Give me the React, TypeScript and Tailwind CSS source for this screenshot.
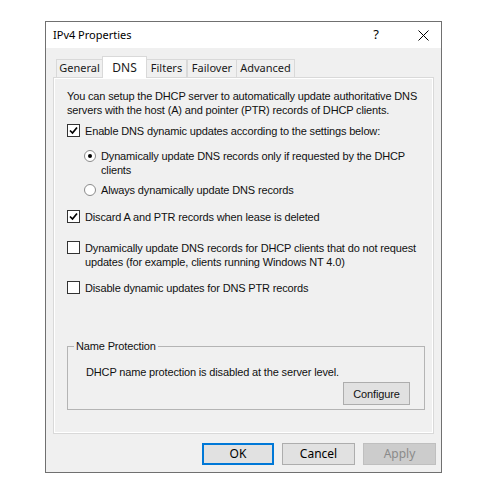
import React from "react";

const body = { fontFamily: '"Liberation Sans", Arial, sans-serif' };
const ui = { fontFamily: '"Noto Sans", "Open Sans", sans-serif' };

function Check({ checked }: { checked?: boolean }) {
  return (
    <div className="w-[13px] h-[13px] border border-[#333] bg-white flex items-center justify-center shrink-0">
      {checked && (
        <svg width="9" height="9" viewBox="0 0 9 9">
          <path d="M1 4.5 L3.5 7 L8 1.5" stroke="#000" strokeWidth="1.7" fill="none" />
        </svg>
      )}
    </div>
  );
}

function Radio({ checked }: { checked?: boolean }) {
  return (
    <svg width="12" height="12" viewBox="0 0 12 12" className="shrink-0">
      <circle cx="6" cy="6" r="5.5" fill="#fff" stroke="#8a8a8a" />
      {checked && <circle cx="6" cy="6" r="2" fill="#000" />}
    </svg>
  );
}

export default function App() {
  return (
    <div className="w-[480px] h-[494px] bg-white pt-[21px] pl-[45px]">
      <div className="w-[397px] h-[452px] border border-[#707070] flex flex-col bg-[#f0f0f0] text-black">
        <div className="h-[26px] bg-white flex items-center pl-[7px] pr-[12px] shrink-0">
          <span className="text-[11px] flex-1" style={ui}>IPv4 Properties</span>
          <span className="text-[13px] mr-[39px]" style={ui}>?</span>
          <svg width="11" height="11" viewBox="0 0 11 11">
            <path d="M0.5 0.5 L10.5 10.5 M10.5 0.5 L0.5 10.5" stroke="#000" strokeWidth="1" />
          </svg>
        </div>
        <div className="flex flex-col px-[7px] pt-[7px] flex-1">
          <div className="flex items-end pl-[3px] h-[22px] relative text-[11px] text-[#1a1a1a]" style={ui}>
            <div className="w-[46px] h-[18px] bg-[#f0f0f0] border border-r-0 border-b-0 border-[#d9d9d9] flex items-center justify-center">General</div>
            <div className="w-[45px] h-[22px] -mb-px bg-white border border-b-0 border-[#d9d9d9] flex items-start justify-center pt-[2px] text-[12px] z-10">DNS</div>
            <div className="w-[40px] h-[18px] bg-[#f0f0f0] border border-l-0 border-b-0 border-[#d9d9d9] flex items-center justify-center">Filters</div>
            <div className="w-[49px] h-[18px] bg-[#f0f0f0] border border-r-0 border-b-0 border-[#d9d9d9] flex items-center justify-center">Failover</div>
            <div className="w-[59px] h-[18px] bg-[#f0f0f0] border border-b-0 border-[#d9d9d9] flex items-center justify-center">Advanced</div>
          </div>
          <div className="h-[357px] border border-[#d9d9d9] bg-[#f0f0f0] shadow-[inset_0_0_0_1px_#ffffff] flex flex-col pl-[13px] pr-[8px] pt-[11px] text-[11px] tracking-[-0.15px] leading-[14px] text-[#111]" style={body}>
            <p>You can setup the DHCP server to automatically update authoritative DNS servers with the host (A) and pointer (PTR) records of DHCP clients.</p>
            <div className="flex items-start gap-[5px] mt-[7px]">
              <div className="mt-[0px]"><Check checked /></div>
              <span>Enable DNS dynamic updates according to the settings below:</span>
            </div>
            <div className="flex items-start gap-[5px] mt-[11px] pl-[17px]">
              <div className="mt-[1px]"><Radio checked /></div>
              <span>Dynamically update DNS records only if requested by the DHCP clients</span>
            </div>
            <div className="flex items-start gap-[5px] mt-[6px] pl-[17px]">
              <div className="mt-[1px]"><Radio /></div>
              <span>Always dynamically update DNS records</span>
            </div>
            <div className="flex items-start gap-[5px] mt-[13px]">
              <div className="mt-[0px]"><Check checked /></div>
              <span>Discard A and PTR records when lease is deleted</span>
            </div>
            <div className="flex items-start gap-[5px] mt-[17px]">
              <div className="mt-[0px]"><Check /></div>
              <span>Dynamically update DNS records for DHCP clients that do not request updates (for example, clients running Windows NT 4.0)</span>
            </div>
            <div className="flex items-start gap-[5px] mt-[12px]">
              <div className="mt-[0px]"><Check /></div>
              <span>Disable dynamic updates for DNS PTR records</span>
            </div>
            <div className="mt-[51px] h-[64px] border border-[#b4b4b4] relative">
              <span className="absolute -top-[8px] left-[6px] bg-[#f0f0f0] px-[2px]">Name Protection</span>
              <div className="pl-[18px] pt-[18px]">DHCP name protection is disabled at the server level.</div>
              <div className="flex justify-end pr-[14px] mt-[3px]">
                <button className="w-[67px] h-[23px] border border-[#adadad] bg-[#e1e1e1]">Configure</button>
              </div>
            </div>
          </div>
          <div className="flex justify-end gap-[8px] mt-[9px] -mr-[2px] text-[12px]" style={ui}>
            <button className="w-[72px] h-[22px] border-2 border-[#0078d7] bg-[#e1e1e1]">OK</button>
            <button className="w-[73px] h-[22px] border border-[#adadad] bg-[#e1e1e1]">Cancel</button>
            <button className="w-[73px] h-[22px] border border-[#bfbfbf] bg-[#cccccc] text-[#8a8a8a]">Apply</button>
          </div>
        </div>
      </div>
    </div>
  );
}
